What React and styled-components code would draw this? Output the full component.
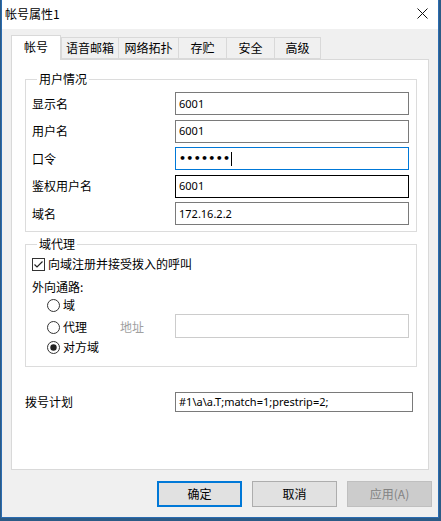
import { Fragment } from 'react';
import styled, { createGlobalStyle } from 'styled-components';

const GlobalStyle = createGlobalStyle`
  html, body {
    margin: 0;
    padding: 0;
    background: #2c5b86;
  }
  body {
    font-family: "Noto Sans CJK SC", "Noto Sans", sans-serif;
    font-size: 12px;
    color: #000;
  }
`;

const Window = styled.div`
  display: flex;
  flex-direction: column;
  width: 436px;
  height: 517px;
  margin-left: 1px;
  background: #f0f0f0;
  border: 1px solid #2b6cb0;
  border-top: none;
`;

const TitleBar = styled.div`
  display: flex;
  align-items: center;
  justify-content: space-between;
  height: 27px;
  padding: 0 10px 2px 3px;
  background: #fff;
  font-size: 12px;
  line-height: 14px;
`;

const CloseIcon = () => (
  <svg width="11" height="11" viewBox="0 0 11 11">
    <path d="M0.5 0.5 L10.5 10.5 M10.5 0.5 L0.5 10.5" stroke="#111" strokeWidth="1" />
  </svg>
);

const Body = styled.div`
  display: flex;
  flex-direction: column;
  padding: 6px 0 0 9px;
`;

const TabRow = styled.div`
  display: flex;
  align-items: flex-end;
  height: 24px;
`;

const Tab = styled.div`
  position: relative;
  box-sizing: border-box;
  display: flex;
  align-items: center;
  justify-content: center;
  width: ${(p) => p.$w}px;
  height: ${(p) => (p.$active ? 25 : 22)}px;
  margin-bottom: ${(p) => (p.$active ? -1 : 0)}px;
  padding-bottom: ${(p) => (p.$active ? 3 : 0)}px;
  background: ${(p) => (p.$active ? '#fff' : '#f0f0f0')};
  border: 1px solid #d9d9d9;
  border-bottom: ${(p) => (p.$active ? 'none' : '1px solid #d9d9d9')};
  border-left: ${(p) => (p.$first || p.$active ? '1px solid #d9d9d9' : 'none')};
  font-size: 12px;
  line-height: 14px;
  white-space: nowrap;
`;

const Panel = styled.div`
  box-sizing: border-box;
  display: flex;
  flex-direction: column;
  width: 418px;
  height: 411px;
  padding: 12px 11px 0 13px;
  background: #fff;
  border: 1px solid #d9d9d9;
`;

const Group = styled.fieldset`
  margin: 0;
  margin-top: ${(p) => p.$top || 0}px;
  padding: ${(p) => p.$pad};
  border: 1px solid #dcdcdc;
  min-inline-size: 0;
`;

const Legend = styled.legend`
  margin-left: 5px;
  padding: 0 2px;
  font-size: 12px;
  line-height: 14px;
`;

const FieldGrid = styled.div`
  display: grid;
  grid-template-columns: 143px 1fr;
  grid-auto-rows: 23px;
  row-gap: 4.5px;
  align-items: center;
`;

const Label = styled.span`
  font-size: 12px;
  line-height: 14px;
  color: ${(p) => (p.$muted ? '#a0a0a0' : '#000')};
  white-space: nowrap;
`;

const toneColor = {
  normal: '#7a7a7a',
  focus: '#0078d7',
  dark: '#000',
  disabled: '#cccccc',
};

const Field = styled.div`
  box-sizing: border-box;
  display: flex;
  align-items: center;
  height: ${(p) => p.$h || 23}px;
  width: ${(p) => (p.$w ? `${p.$w}px` : 'auto')};
  flex: ${(p) => (p.$w ? 'none' : '1')};
  padding: 0 3px;
  background: #fff;
  border: 1px solid ${(p) => toneColor[p.$tone || 'normal']};
  font-family: "Noto Sans", sans-serif;
  font-size: 11px;
  line-height: 14px;
  white-space: nowrap;
  overflow: hidden;
`;

const Dots = styled.span`
  font-family: "DejaVu Sans", sans-serif;
  font-size: 11px;
  font-weight: bold;
  letter-spacing: 0.3px;
`;

const Caret = styled.span`
  display: inline-block;
  width: 1px;
  height: 14px;
  margin-left: 1px;
  background: #000;
`;

const OptionColumn = styled.div`
  display: flex;
  flex-direction: column;
`;

const CheckRow = styled.div`
  display: flex;
  align-items: center;
  gap: 3px;
  height: 20px;
`;

const SubTitle = styled.div`
  display: flex;
  align-items: center;
  height: 18px;
  margin-top: 4px;
`;

const RadioRow = styled.div`
  display: flex;
  align-items: center;
  height: ${(p) => p.$h || 18}px;
  padding-left: 15px;
`;

const RadioItem = styled.div`
  display: flex;
  align-items: center;
  gap: 3px;
  width: ${(p) => (p.$w ? `${p.$w}px` : 'auto')};
  padding-top: ${(p) => p.$nudge || 0}px;
`;

const AddrLabel = styled(Label)`
  width: 55px;
  padding-top: 2px;
`;

const CheckIcon = () => (
  <svg width="13" height="13" viewBox="0 0 13 13">
    <rect x="0.5" y="0.5" width="12" height="12" fill="#fff" stroke="#333" />
    <path d="M2.5 6.5 L5 9 L10.5 3.5" fill="none" stroke="#222" strokeWidth="1.2" />
  </svg>
);

const RadioIcon = ({ checked }) => (
  <svg width="13" height="13" viewBox="0 0 13 13">
    <circle cx="6.5" cy="6.5" r="6" fill="#fff" stroke="#333" />
    {checked && <circle cx="6.5" cy="6.5" r="3.2" fill="#222" />}
  </svg>
);

const DialRow = styled.div`
  display: flex;
  align-items: center;
  margin-top: 25px;
`;

const DialLabel = styled(Label)`
  width: 150px;
`;

const ButtonRow = styled.div`
  display: flex;
  justify-content: flex-end;
  gap: 10px;
  margin-top: 11px;
  padding-right: 6px;
`;

const Button = styled.div`
  box-sizing: border-box;
  display: flex;
  align-items: center;
  justify-content: center;
  width: 85px;
  height: 26px;
  background: ${(p) => (p.$disabled ? '#cccccc' : '#e1e1e1')};
  border: ${(p) =>
    p.$primary ? '2px solid #0078d7' : p.$disabled ? '1px solid #bfbfbf' : '1px solid #adadad'};
  color: ${(p) => (p.$disabled ? '#838383' : '#000')};
  font-size: 12px;
  line-height: 14px;
`;

const tabs = [
  { name: '帐号', w: 50 },
  { name: '语音邮箱', w: 58 },
  { name: '网络拓扑', w: 60 },
  { name: '存贮', w: 48 },
  { name: '安全', w: 48 },
  { name: '高级', w: 46 },
];

const userFields = [
  { label: '显示名', value: '6001' },
  { label: '用户名', value: '6001' },
  { label: '口令', password: true, tone: 'focus' },
  { label: '鉴权用户名', value: '6001', tone: 'dark' },
  { label: '域名', value: '172.16.2.2' },
];

export default function App() {
  return (
    <>
      <GlobalStyle />
      <Window>
        <TitleBar>
          <span>帐号属性1</span>
          <CloseIcon />
        </TitleBar>
        <Body>
          <TabRow>
            {tabs.map((t, i) => (
              <Tab key={t.name} $w={t.w} $active={i === 0} $first={i === 1}>
                {t.name}
              </Tab>
            ))}
          </TabRow>
          <Panel>
            <Group $pad="6px 7px 6px 6px">
              <Legend>用户情况</Legend>
              <FieldGrid>
                {userFields.map((f) => (
                  <Fragment key={f.label}>
                    <Label>{f.label}</Label>
                    <Field $tone={f.tone}>
                      {f.password ? (
                        <>
                          <Dots>•••••••</Dots>
                          <Caret />
                        </>
                      ) : (
                        f.value
                      )}
                    </Field>
                  </Fragment>
                ))}
              </FieldGrid>
            </Group>

            <Group $top={5} $pad="3px 7px 10px 6px">
              <Legend>域代理</Legend>
              <OptionColumn>
                <CheckRow>
                  <CheckIcon />
                  <Label>向域注册并接受拨入的呼叫</Label>
                </CheckRow>
                <SubTitle>
                  <Label>外向通路:</Label>
                </SubTitle>
                <RadioRow>
                  <RadioItem>
                    <RadioIcon />
                    <Label>域</Label>
                  </RadioItem>
                </RadioRow>
                <RadioRow $h={24}>
                  <RadioItem $w={73} $nudge={2}>
                    <RadioIcon />
                    <Label>代理</Label>
                  </RadioItem>
                  <AddrLabel $muted>地址</AddrLabel>
                  <Field $h={24} $tone="disabled" />
                </RadioRow>
                <RadioRow>
                  <RadioItem>
                    <RadioIcon checked />
                    <Label>对方域</Label>
                  </RadioItem>
                </RadioRow>
              </OptionColumn>
            </Group>

            <DialRow>
              <DialLabel>拨号计划</DialLabel>
              <Field $h={20} $w={238}>
                #1\a\a.T;match=1;prestrip=2;
              </Field>
            </DialRow>
          </Panel>
          <ButtonRow>
            <Button $primary>确定</Button>
            <Button>取消</Button>
            <Button $disabled>应用(A)</Button>
          </ButtonRow>
        </Body>
      </Window>
    </>
  );
}
